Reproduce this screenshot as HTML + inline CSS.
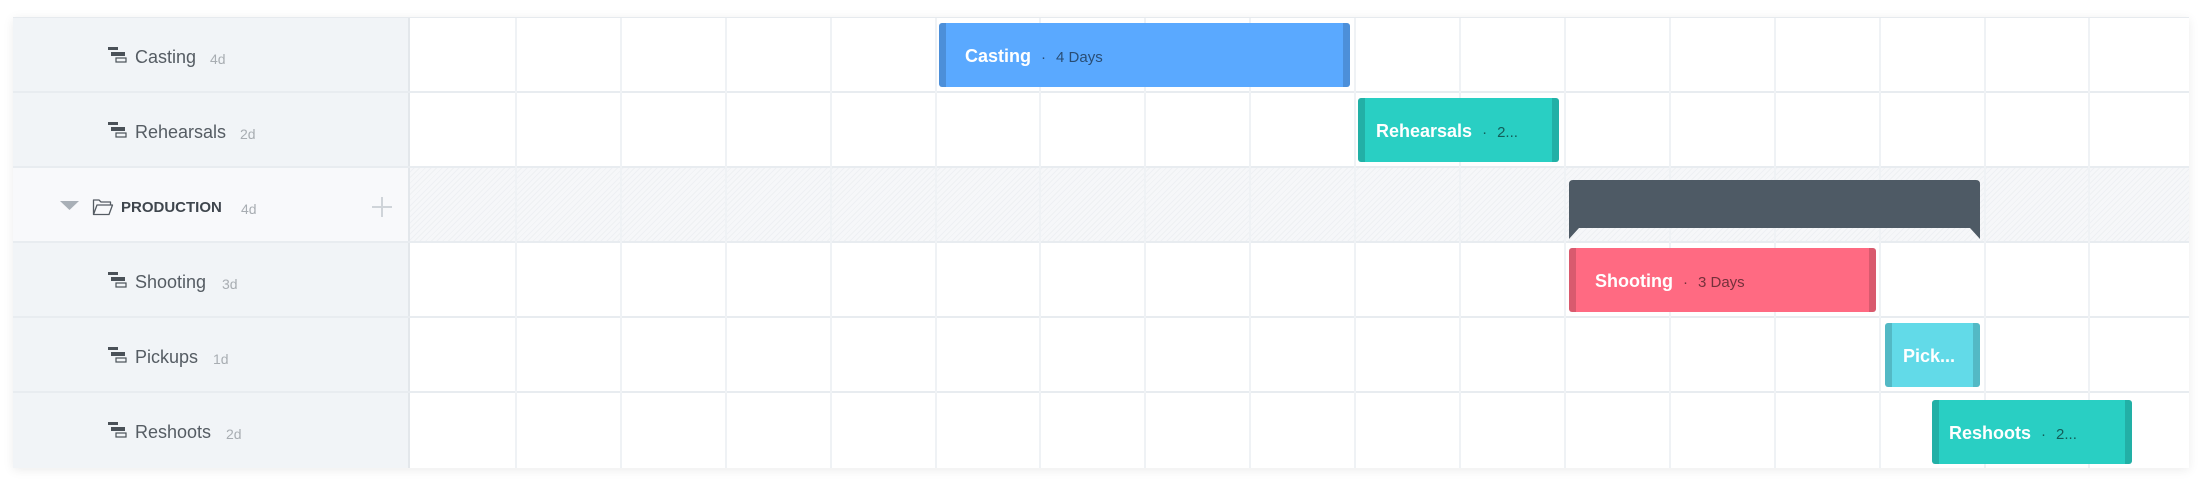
<!DOCTYPE html>
<html><head><meta charset="utf-8"><style>
*{margin:0;padding:0;box-sizing:border-box}
body{width:2207px;height:485px;background:#fff;font-family:"Liberation Sans",sans-serif;position:relative;overflow:hidden}
#wrap{position:absolute;left:13px;top:17px;width:2176px;height:451px;box-shadow:0 2px 10px rgba(0,0,0,.08);background:#fff;border-top:1px solid #e6eaee}
.row{position:absolute;left:0;width:2176px;height:75px;border-bottom:2px solid #e8ecf0}
.lp{position:absolute;left:0;top:0;width:397px;height:100%;background:#f1f4f7;border-right:2px solid #e3e7eb}
.row.sum{background:repeating-linear-gradient(135deg,#f6f7f9 0 3px,#eef0f3 3px 4px)}
.row.sum .lp{background:#f8f9fb}
.vl{position:absolute;top:0;bottom:0;width:2px;background:#eff2f5}
.name{position:absolute;top:26px;font-size:18px;color:#555c63}
.dur{position:absolute;top:29px;font-size:14px;color:#a8adb2}
.bar{position:absolute;height:64px;border-radius:3px;color:#fff;font-size:18px;font-weight:bold;line-height:66px;padding-left:26px;white-space:nowrap;overflow:hidden}
.bar:before,.bar:after{content:"";position:absolute;top:0;bottom:0;width:7px;background:rgba(0,0,0,.15)}
.bar:before{left:0}.bar:after{right:0}
.bar span{font-weight:normal;font-size:15px;color:rgba(0,0,0,.55)}
.bar span b{font-weight:normal;margin:0 10px}
</style></head><body>
<div id="wrap">
<div class="row" style="top:0"><div class="lp"></div></div>
<div class="row" style="top:75px"><div class="lp"></div></div>
<div class="row sum" style="top:150px"><div class="lp"></div></div>
<div class="row" style="top:225px"><div class="lp"></div></div>
<div class="row" style="top:300px"><div class="lp"></div></div>
<div class="row" style="top:375px;border-bottom:none"><div class="lp"></div></div>
</div>
<div id="grid"></div>
<script>
var g='';for(var k=1;k<17;k++){var x=410+k*104.9;g+='<div class="vl" style="left:'+x+'px;top:18px;height:450px;position:absolute"></div>';}
document.getElementById('grid').innerHTML=g;
</script>
<svg style="position:absolute;left:0;top:0" width="2207" height="485">
<g fill="#4a5158">
<g transform="translate(108,47)"><rect x="0" y="0" width="10" height="3"/><rect x="3" y="5" width="14" height="4"/><rect x="8" y="11" width="10" height="4" fill="none" stroke="#4a5158" stroke-width="1.2"/></g>
<g transform="translate(108,122)"><rect x="0" y="0" width="10" height="3"/><rect x="3" y="5" width="14" height="4"/><rect x="8" y="11" width="10" height="4" fill="none" stroke="#4a5158" stroke-width="1.2"/></g>
<g transform="translate(108,272)"><rect x="0" y="0" width="10" height="3"/><rect x="3" y="5" width="14" height="4"/><rect x="8" y="11" width="10" height="4" fill="none" stroke="#4a5158" stroke-width="1.2"/></g>
<g transform="translate(108,347)"><rect x="0" y="0" width="10" height="3"/><rect x="3" y="5" width="14" height="4"/><rect x="8" y="11" width="10" height="4" fill="none" stroke="#4a5158" stroke-width="1.2"/></g>
<g transform="translate(108,422)"><rect x="0" y="0" width="10" height="3"/><rect x="3" y="5" width="14" height="4"/><rect x="8" y="11" width="10" height="4" fill="none" stroke="#4a5158" stroke-width="1.2"/></g>
</g>
<path d="M60 201 L79 201 L69.5 210 Z" fill="#a9b0b7"/>
<path d="M93.5 214.5 V200 H99 L101 202 H110.5 V205 M93.5 214.5 L97 205 H112.5 L109 214.5 Z" fill="none" stroke="#555c63" stroke-width="1.3" stroke-linejoin="round"/>
<path d="M382 197 V217 M372 207 H392" stroke="#cfd4d9" stroke-width="2"/>
<path d="M1569 184 Q1569 180 1573 180 H1976 Q1980 180 1980 184 V239 L1970 228 H1579 L1569 239 Z" fill="#4e5a65"/>
</svg>
<div class="name" style="left:135px;top:47px">Casting</div><div class="dur" style="left:210px;top:51px">4d</div>
<div class="name" style="left:135px;top:122px">Rehearsals</div><div class="dur" style="left:240px;top:126px">2d</div>
<div class="name" style="left:121px;top:199px;font-size:15px;font-weight:bold;color:#3f464d">PRODUCTION</div><div class="dur" style="left:241px;top:201px">4d</div>
<div class="name" style="left:135px;top:272px">Shooting</div><div class="dur" style="left:222px;top:276px">3d</div>
<div class="name" style="left:135px;top:347px">Pickups</div><div class="dur" style="left:213px;top:351px">1d</div>
<div class="name" style="left:135px;top:422px">Reshoots</div><div class="dur" style="left:226px;top:426px">2d</div>
<div class="bar" style="left:939px;top:23px;width:411px;background:#5aa9ff">Casting<span><b>·</b>4 Days</span></div>
<div class="bar" style="left:1358px;top:98px;width:201px;background:#29cfc3;padding-left:18px">Rehearsals<span><b>·</b>2...</span></div>
<div class="bar" style="left:1569px;top:248px;width:307px;background:#ff6a82">Shooting<span><b>·</b>3 Days</span></div>
<div class="bar" style="left:1885px;top:323px;width:95px;background:#62dae8;padding-left:18px">Pick...</div>
<div class="bar" style="left:1932px;top:400px;width:200px;background:#29cfc3;padding-left:17px">Reshoots<span><b>·</b>2...</span></div>
</body></html>
